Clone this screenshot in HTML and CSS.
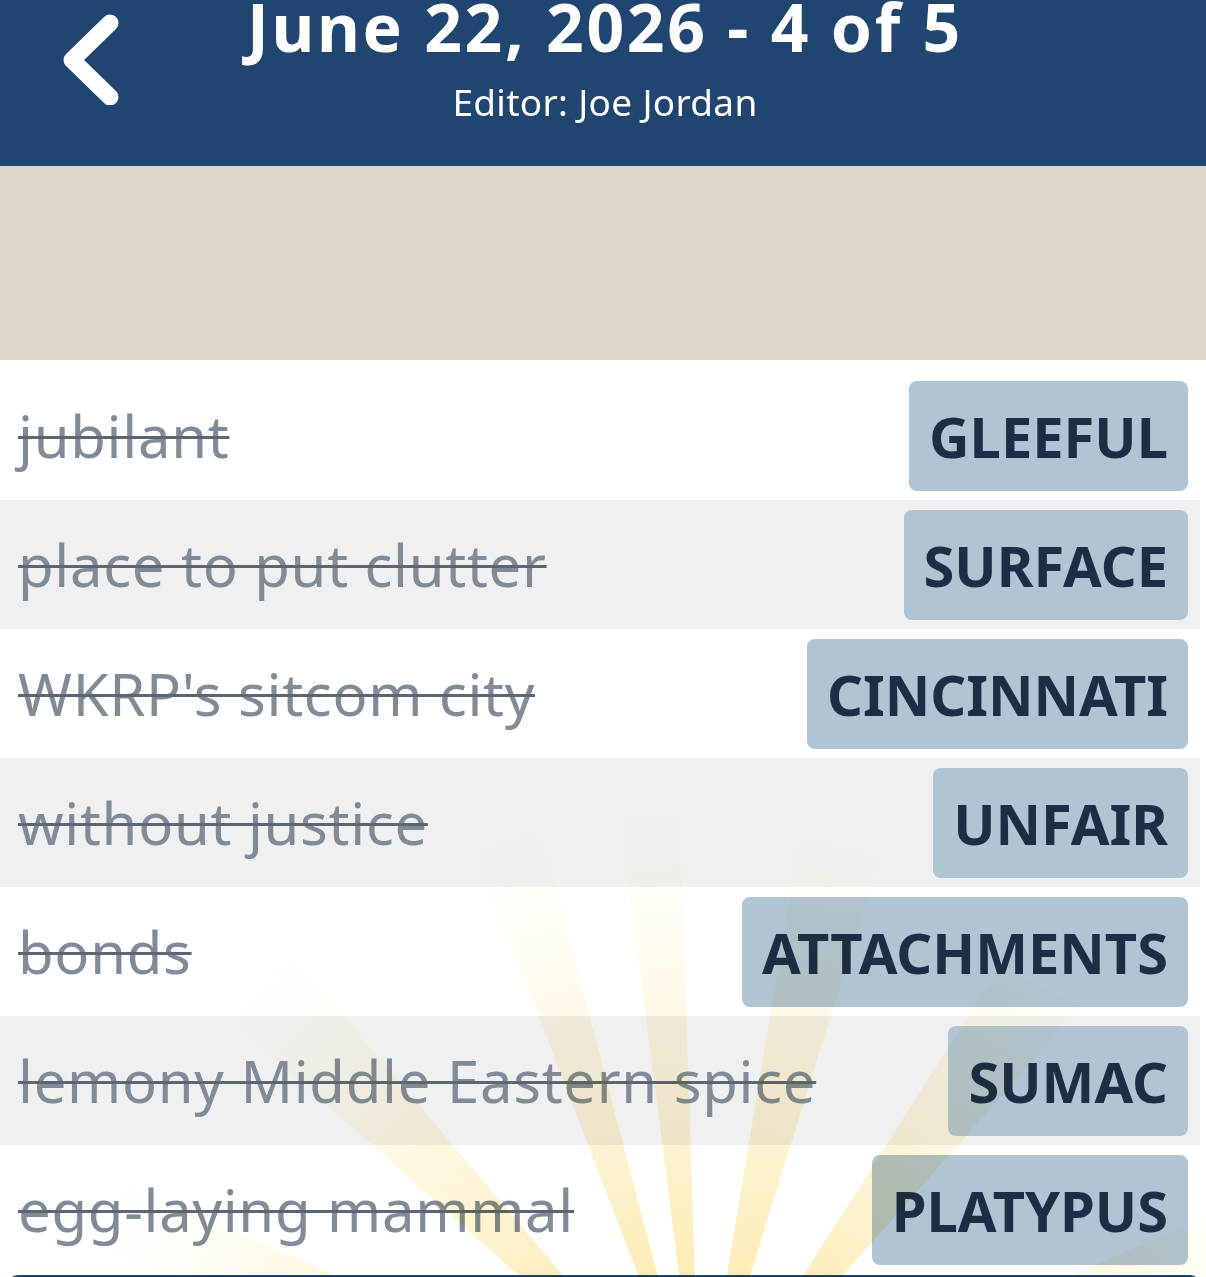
FILE: index.html
```html
<!DOCTYPE html>
<html lang="en">
<head>
  <meta charset="UTF-8" />
  <meta name="viewport" content="width=device-width, initial-scale=1.0"/>
  <title>Puzzle 4 of 5</title>
  <link rel="stylesheet" href="styles.css">
</head>
<body>
<div class="app">
  <header class="topbar">
    <button class="back-btn" aria-label="Back">
      <svg width="70" height="92" viewBox="0 0 70 92">
        <path d="M54 10 L16 47 L54 84" fill="none" stroke="#fff" stroke-width="17" stroke-linecap="round" stroke-linejoin="round"/>
      </svg>
    </button>
    <div class="titles">
      <h1>June 22, 2026 - 4 of 5</h1>
      <p class="editor">Editor: Joe Jordan</p>
    </div>
  </header>

  <div class="banner"></div>

  <ul class="answers">
    <li class="row"><span class="clue">jubilant</span><span class="answer">GLEEFUL</span></li>
    <li class="row"><span class="clue">place to put clutter</span><span class="answer">SURFACE</span></li>
    <li class="row"><span class="clue">WKRP's sitcom city</span><span class="answer">CINCINNATI</span></li>
    <li class="row"><span class="clue">without justice</span><span class="answer">UNFAIR</span></li>
    <li class="row"><span class="clue">bonds</span><span class="answer">ATTACHMENTS</span></li>
    <li class="row"><span class="clue">lemony Middle Eastern spice</span><span class="answer">SUMAC</span></li>
    <li class="row"><span class="clue">egg-laying mammal</span><span class="answer">PLATYPUS</span></li>
  </ul>

  <div class="footer-bar"></div>

  <!-- celebration rays over the bottom of the list -->
  <svg class="rays" width="1206" height="480" viewBox="0 0 1206 480">
    <defs>
      <radialGradient id="fade" cx="700" cy="640" r="640" gradientUnits="userSpaceOnUse">
        <stop offset="0.25" stop-color="#fbd96a" stop-opacity="0.5"/>
        <stop offset="0.7" stop-color="#fbe39a" stop-opacity="0.22"/>
        <stop offset="1" stop-color="#fff3c8" stop-opacity="0"/>
      </radialGradient>
    </defs>
    <g fill="url(#fade)">
      <polygon points="700,640 0,330 0,420"/>
      <polygon points="700,640 150,150 260,120"/>
      <polygon points="700,640 470,40 540,30"/>
      <polygon points="700,640 620,20 680,20"/>
      <polygon points="700,640 800,40 880,60"/>
      <polygon points="700,640 1000,170 1080,210"/>
      <polygon points="700,640 1206,420 1206,480"/>
    </g>
  </svg>
</div>
</body>
</html>
```

FILE: styles.css
```css
* { box-sizing: border-box; }
body {
  margin: 0;
  font-family: "Noto Sans", "Open Sans", sans-serif;
  background: #fff;
  color: #1c2e45;
}
.app {
  position: relative;
  width: 1206px;
  height: 1277px;
  overflow: hidden;
}
.topbar {
  height: 166px;
  background: #1f4570;
  color: #fff;
  display: flex;
  justify-content: center;
  position: relative;
}
.back-btn {
  position: absolute;
  left: 56px;
  top: 13px;
  background: none;
  border: none;
  padding: 0;
}
.titles {
  text-align: center;
  padding-left: 4px;
}
.titles h1 {
  margin: -19px 0 0;
  font-size: 66px;
  font-weight: 700;
  line-height: 90px;
  letter-spacing: 2.6px;
}
.editor {
  margin: 6px 0 0;
  font-size: 37px;
  line-height: 50px;
  letter-spacing: 0.3px;
}
.banner {
  height: 194px;
  background: #ded8cc;
}
.answers {
  list-style: none;
  margin: 0;
  padding: 11px 0 0;
  width: 1200px;
}
.row {
  height: 129px;
  display: flex;
  align-items: center;
  justify-content: space-between;
  padding: 0 12px 0 18px;
}
.row:nth-child(even) { background: #f0f0f0; }
.clue {
  font-size: 58px;
  color: #818b97;
  text-decoration: line-through;
  text-decoration-color: #5b6672;
  text-decoration-thickness: 3px;
  letter-spacing: 0.7px;
}
.answer {
  height: 110px;
  display: flex;
  align-items: center;
  padding: 0 20px;
  background: #b1c4d4;
  border-radius: 8px;
  font-size: 56px;
  font-weight: 700;
  color: #1c2e45;
}
.footer-bar {
  height: 20px;
  margin: 1px 6px 0 8px;
  background: #1f4570;
  border-radius: 10px 10px 0 0;
}
.rays {
  position: absolute;
  left: 0;
  bottom: 0;
  pointer-events: none;
  mix-blend-mode: multiply;
}
```
